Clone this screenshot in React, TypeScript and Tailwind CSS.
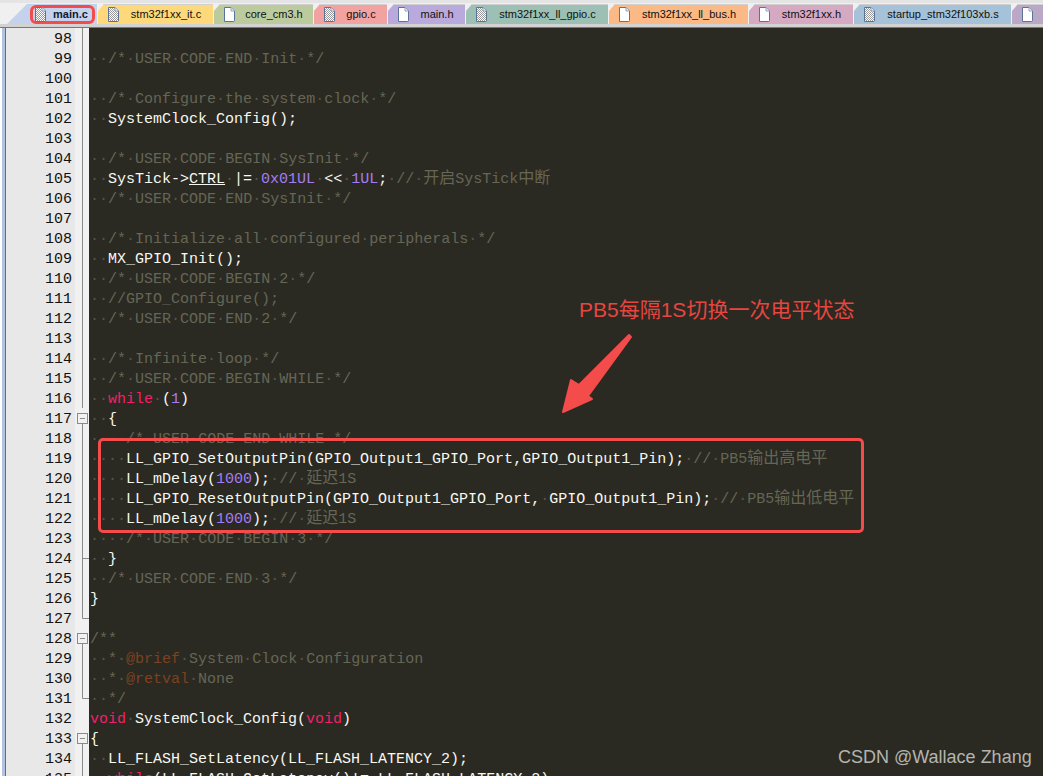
import React from "react";

type Kind = "t" | "c" | "k" | "n" | "d" | "u";
type Seg = [Kind, string];

const tabs = [
  { name: "stm32f1xx_it.c", w: "w-[116px]", bg: "bg-[#fdd97c]", hatch: true },
  { name: "core_cm3.h", w: "w-[100px]", bg: "bg-[#bccb9e]", hatch: false },
  { name: "gpio.c", w: "w-[74px]", bg: "bg-[#f3a2a2]", hatch: true },
  { name: "main.h", w: "w-[78px]", bg: "bg-[#b9a9dd]", hatch: false },
  { name: "stm32f1xx_ll_gpio.c", w: "w-[143px]", bg: "bg-[#9dc0b4]", hatch: true },
  { name: "stm32f1xx_ll_bus.h", w: "w-[140px]", bg: "bg-[#fbb985]", hatch: false },
  { name: "stm32f1xx.h", w: "w-[105px]", bg: "bg-[#d6a9c3]", hatch: false },
  { name: "startup_stm32f103xb.s", w: "w-[158px]", bg: "bg-[#a6c2d8]", hatch: true },
  { name: "", w: "w-[32px]", bg: "bg-[#bba8c6]", hatch: false },
];

const kindClass: Record<Kind, string> = {
  t: "text-[#f8f8f2]",
  c: "text-[#666655]",
  k: "text-[#f0206a]",
  n: "text-[#a67cf5]",
  d: "text-[#7d4220]",
  u: "text-[#f8f8f2] underline",
};

const c = (s: string): Seg[] => [["c", s]];
const t = (s: string): Seg[] => [["t", s]];

// one entry per line, starting at line 98
const lines: Seg[][] = [
  [],
  c("  /* USER CODE END Init */"),
  [],
  c("  /* Configure the system clock */"),
  t("  SystemClock_Config();"),
  [],
  c("  /* USER CODE BEGIN SysInit */"),
  [["t", "  SysTick->"], ["u", "CTRL"], ["t", " |= "], ["n", "0x01UL"], ["t", " << "], ["n", "1UL"], ["t", "; "], ["c", "// 开启SysTick中断"]],
  c("  /* USER CODE END SysInit */"),
  [],
  c("  /* Initialize all configured peripherals */"),
  t("  MX_GPIO_Init();"),
  c("  /* USER CODE BEGIN 2 */"),
  c("  //GPIO_Configure();"),
  c("  /* USER CODE END 2 */"),
  [],
  c("  /* Infinite loop */"),
  c("  /* USER CODE BEGIN WHILE */"),
  [["t", "  "], ["k", "while"], ["t", " ("], ["n", "1"], ["t", ")"]],
  t("  {"),
  c("    /* USER CODE END WHILE */"),
  [["t", "    LL_GPIO_SetOutputPin(GPIO_Output1_GPIO_Port,GPIO_Output1_Pin); "], ["c", "// PB5输出高电平"]],
  [["t", "    LL_mDelay("], ["n", "1000"], ["t", "); "], ["c", "// 延迟1S"]],
  [["t", "    LL_GPIO_ResetOutputPin(GPIO_Output1_GPIO_Port, GPIO_Output1_Pin); "], ["c", "// PB5输出低电平"]],
  [["t", "    LL_mDelay("], ["n", "1000"], ["t", "); "], ["c", "// 延迟1S"]],
  c("    /* USER CODE BEGIN 3 */"),
  t("  }"),
  c("  /* USER CODE END 3 */"),
  t("}"),
  [],
  c("/**"),
  [["c", "  * "], ["d", "@brief"], ["c", " System Clock Configuration"]],
  [["c", "  * "], ["d", "@retval"], ["c", " None"]],
  c("  */"),
  [["k", "void"], ["t", " SystemClock_Config("], ["k", "void"], ["t", ")"]],
  t("{"),
  t("  LL_FLASH_SetLatency(LL_FLASH_LATENCY_2);"),
  [["t", "  "], ["k", "while"], ["t", "(LL_FLASH_GetLatency()!= LL_FLASH_LATENCY_2)"]],
];

const foldFor = (n: number) => {
  if (n === 117 || n === 128 || n === 133) return "box";
  if (n === 124) return "tee";
  if (n === 127 || n === 131) return "end";
  if (n === 132) return "none";
  return "line";
};

const FoldMark = ({ kind }: { kind: string }) => (
  <svg width="14" height="20" className="shrink-0 bg-[#f1f1f1]">
    {kind === "box" && (
      <>
        <path d="M7.5 15.5V20" stroke="#8a8a8a" />
        <rect x="2.5" y="5.5" width="10" height="10" fill="#f1f1f1" stroke="#8a8a8a" />
        <path d="M5 10.5H10" stroke="#8a8a8a" />
      </>
    )}
    {kind === "line" && <path d="M7.5 0V20" stroke="#8a8a8a" />}
    {kind === "tee" && <path d="M7.5 0V20M7.5 10.5H14" stroke="#8a8a8a" />}
    {kind === "end" && <path d="M7.5 0V10.5H14" stroke="#8a8a8a" fill="none" />}
  </svg>
);

const FileIcon = ({ hatch }: { hatch: boolean }) => (
  <svg width="12" height="15" viewBox="0 0 12 15" className="shrink-0">
    <defs>
      <pattern id="hatch" width="2" height="2" patternUnits="userSpaceOnUse">
        <rect width="2" height="2" fill="#fff" />
        <rect width="1" height="1" fill="#9a9a9a" />
        <rect x="1" y="1" width="1" height="1" fill="#9a9a9a" />
      </pattern>
    </defs>
    <path
      d="M1.5 .5H8L11.5 4V13.5Q11.5 14.5 10.5 14.5H1.5Z"
      fill={hatch ? "url(#hatch)" : "#fff"}
      stroke="#5b7398"
    />
    <path d="M8 .5V4H11.5" fill="#e6ecf5" stroke="#8fa3c0" />
  </svg>
);

const Code = ({ segs }: { segs: Seg[] }) => (
  <div className="h-5 whitespace-pre pl-px leading-6">
    {segs.map(([kind, text], i) => (
      <span key={i} className={kindClass[kind]}>
        {text.split(/( |[\u4e00-\u9fff]+)/).map((part, j) =>
          part === " " ? (
            <span key={j} className="text-[#55554a]">·</span>
          ) : /[\u4e00-\u9fff]/.test(part) ? (
            <span key={j} className="font-['Noto_Sans_CJK_SC',sans-serif] text-[16px] leading-none">{part}</span>
          ) : (
            part
          ),
        )}
      </span>
    ))}
  </div>
);

export default function App() {
  return (
    <div className="relative flex h-[776px] w-[1043px] flex-col overflow-hidden bg-[#f0f0f0] font-['Liberation_Mono',monospace] text-[15px]">
      {/* Tab strip */}
      <div className="flex h-6 shrink-0 items-end border-t-[3px] border-t-[#e4e4e4] pl-[7px] font-['Liberation_Sans',sans-serif] text-[11px] text-[#111]">
        <div className="flex h-[20px] w-[90px] shrink-0 items-end justify-end bg-[#c5d2ee] pr-[2px] [clip-path:polygon(20px_0,100%_0,100%_100%,0_100%)]">
          <div className="flex h-[19px] w-[65px] items-center gap-[7px] rounded-[6px] border-[3px] border-[#f44b4b] pl-px">
            <FileIcon hatch />
            <span className="font-bold leading-none text-[#10182c]">main.c</span>
          </div>
        </div>
        {tabs.map((tab) => (
          <div
            key={tab.name || "more"}
            className={`flex h-[20px] shrink-0 items-center border-t border-t-[#d0d0d0] pl-[10px] [clip-path:polygon(7px_0,100%_0,100%_100%,1px_100%,1px_7px)] ${tab.w} ${tab.bg}`}
          >
            <FileIcon hatch={tab.hatch} />
            <span className="flex-1 whitespace-nowrap text-center leading-none">{tab.name}</span>
          </div>
        ))}
      </div>
      <div className="h-1 shrink-0 border-b border-b-[#77777a] bg-[#d2d2d2]" />

      {/* Editor */}
      <div className="flex min-h-0 flex-1">
        <div className="w-[2px] shrink-0 bg-white" />
        <div className="w-1 shrink-0 border-r border-r-[#6b6b6b] bg-[#b5c2e0]" />
        <div className="min-w-0 flex-1 bg-[#2a2a23]">
          {lines.map((segs, i) => {
            const n = 98 + i;
            return (
              <div key={n} className="flex h-5">
                <div className="h-5 w-[69px] shrink-0 bg-[#e8e8e8] pr-[3px] text-right leading-6 text-[#111]">{n}</div>
                <FoldMark kind={foldFor(n)} />
                <Code segs={segs} />
              </div>
            );
          })}
        </div>
      </div>

      {/* Annotations drawn on top of the screenshot */}
      <div className="absolute left-[98px] top-[438px] h-[95px] w-[766px] rounded-[5px] border-[3px] border-[#f44b4b]" />
      <svg className="absolute left-[550px] top-[325px]" width="95" height="100" viewBox="550 325 95 100">
        <path
          d="M629 335L631 337L588 396L592 399L563 412L571 380L579 385Z"
          fill="#f44b4b"
          stroke="#f44b4b"
          strokeWidth="2"
          strokeLinejoin="round"
        />
      </svg>
      <div className="absolute left-[579px] top-[296px] whitespace-nowrap font-['Liberation_Sans','Noto_Sans_CJK_SC',sans-serif] text-[21px] leading-[28px] text-[#e8453f]">
        PB5每隔1S切换一次电平状态
      </div>
      <div className="absolute left-[838px] top-[745px] whitespace-nowrap font-['Liberation_Sans',sans-serif] text-[18px] leading-6 text-[#b4b4b0]">
        CSDN @Wallace Zhang
      </div>
    </div>
  );
}
